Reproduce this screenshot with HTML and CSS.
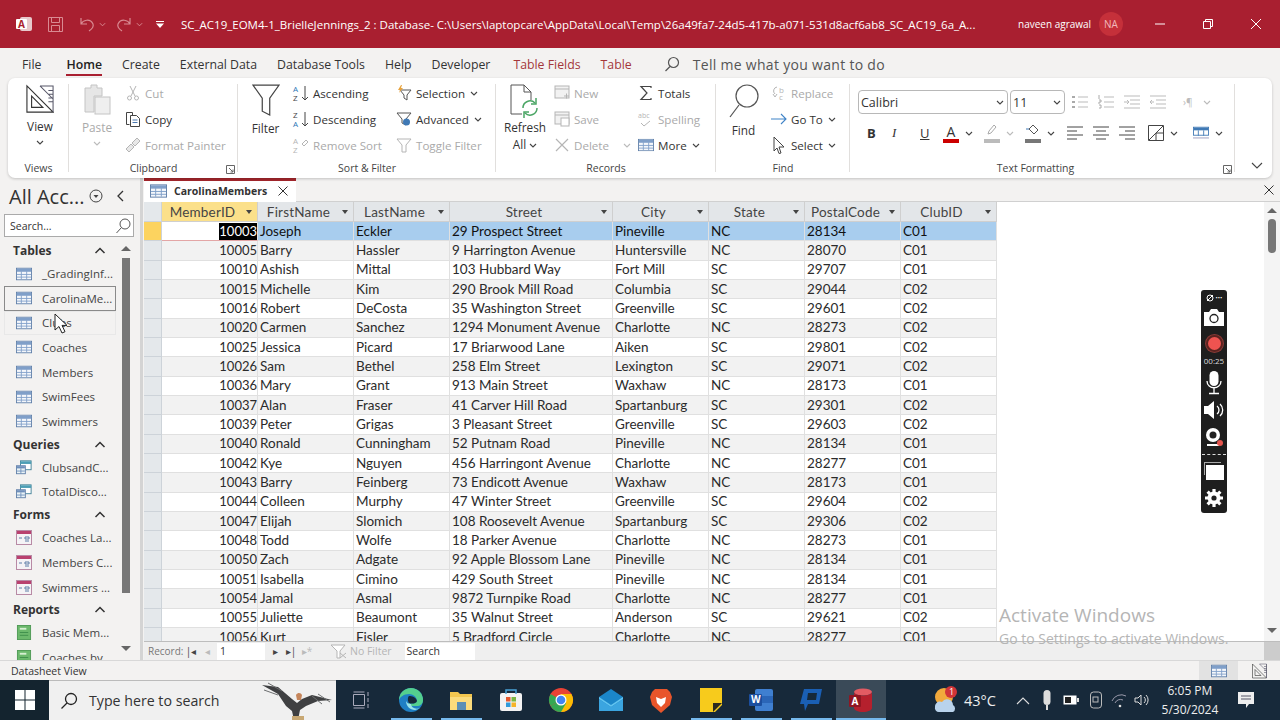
FILE: index.html
```html
<!DOCTYPE html>
<html lang="en">
<head>
    <meta charset="UTF-8">
    <title>CarolinaMembers - Access</title>
    <link rel="stylesheet" href="styles.css">
</head>
<body>
    <!-- shared icons -->
    <svg class="defs" width="0" height="0">
        <symbol id="i-chev" viewBox="0 0 8 5"><path d="M1 1l3 3 3-3" fill="none" stroke="currentColor" stroke-width="1.1"/></symbol>
        <symbol id="i-up" viewBox="0 0 12 7"><path d="M1.5 6L6 1.5 10.5 6" fill="none" stroke="#333" stroke-width="1.5"/></symbol>
        <symbol id="i-table" viewBox="0 0 18 14"><rect x=".5" y=".5" width="17" height="13" fill="#f4f7fb" stroke="#5f7ea8"/><rect x="1" y="1" width="16" height="3.5" fill="#7f9fc9"/><path d="M1 7.5h16M1 10.5h16M6 4v9M12 4v9" stroke="#7f9fc9"/></symbol>
        <symbol id="i-query" viewBox="0 0 18 16"><rect x="5" y=".5" width="12" height="10" fill="#fff" stroke="#3d7f95"/><rect x="5" y="1" width="12" height="3" fill="#4d9fb5"/><rect x=".5" y="6" width="10" height="9" fill="#eaf3f6" stroke="#5f7ea8"/><rect x="1" y="6.5" width="9" height="2.5" fill="#6f8fbb"/><path d="M5.5 9v6M1 12h9" stroke="#6f8fbb"/></symbol>
        <symbol id="i-form" viewBox="0 0 16 15"><rect x=".5" y=".5" width="15" height="14" fill="#f5f3f6" stroke="#b88aa5"/><rect x="1" y="1" width="14" height="3" fill="#b9416f"/><path d="M3 8h3M9 7h4v2H9zM9 11h4" stroke="#5f7ea8" fill="none"/></symbol>
        <symbol id="i-report" viewBox="0 0 15 16"><rect x=".5" y=".5" width="14" height="15" fill="#6cb96c" stroke="#4f9a55"/><rect x="3" y="3" width="7" height="2" fill="#d6efd2"/><path d="M3 8h9M3 11h9" stroke="#3f8f4c"/></symbol>
        <symbol id="i-ruler" viewBox="0 0 30 30"><path d="M1 1l28 28H1zM6 12v12h12z" fill="none" stroke="#333" stroke-width="1.2"/><path d="M29 1v28M15 1h14L29 29M15 1l14 14M24 6h5M24 10h5M24 14h5M24 18h5" fill="none" stroke="#556" stroke-width="1.1"/></symbol>
        <symbol id="i-funnel" viewBox="0 0 30 34"><path d="M1 1h28L19 15v18l-8-4V15z" fill="#fff" stroke="#444" stroke-width="1.3"/></symbol>
    </svg>

    <header class="titlebar">
        <div class="qat">
            <svg class="app-icon" width="18" height="18" viewBox="0 0 18 18"><rect x="5" y="2" width="12" height="14" rx="2" fill="#e7c9cc"/><rect x="1" y="4" width="11" height="10" rx="1" fill="#fff"/><text x="3" y="12.5" class="app-letter">A</text></svg>
            <svg class="qat-save" width="15" height="15" viewBox="0 0 15 15"><path d="M.5.5h14v14H.5zM3.5 .5v5h8v-5M3.5 14.5v-6h8v6" fill="none" stroke="#d98a92"/></svg>
            <svg class="qat-undo" width="16" height="16" viewBox="0 0 16 16"><path d="M2 2v6h6M2 8c2-4 9-6 12 0 1 3-1 5-4 7" fill="none" stroke="#d98a92" stroke-width="1.2"/></svg>
            <svg class="qat-chev" width="7" height="5"><use href="#i-chev"/></svg>
            <svg class="qat-redo" width="16" height="16" viewBox="0 0 16 16"><path d="M14 2v6H8M14 8C12 4 5 2 2 8c-1 3 1 5 4 7" fill="none" stroke="#d98a92" stroke-width="1.2"/></svg>
            <svg class="qat-chev" width="7" height="5"><use href="#i-chev"/></svg>
            <svg class="qat-more" width="8" height="7" viewBox="0 0 8 7"><path d="M0 0h8v1H0zM0 2.5h8L4 7z" fill="#fff"/></svg>
        </div>
        <div class="doc-title">SC_AC19_EOM4-1_BrielleJennings_2 : Database- C:\Users\laptopcare\AppData\Local\Temp\26a49fa7-24d5-417b-a071-531d8acf6ab8_SC_AC19_6a_A...</div>
        <div class="account">naveen agrawal</div>
        <div class="avatar">NA</div>
        <div class="win-btns">
            <svg width="12" height="12" viewBox="0 0 12 12"><path d="M1 6h10" stroke="#fff"/></svg>
            <svg width="12" height="12" viewBox="0 0 12 12"><path d="M1.5 3.5h7v7h-7zM3.5 3.5v-2h7v7h-2" fill="none" stroke="#fff"/></svg>
            <svg width="12" height="12" viewBox="0 0 12 12"><path d="M1 1l10 10M11 1L1 11" stroke="#fff"/></svg>
        </div>
    </header>

    <nav class="tabs">
        <span>File</span>
        <span class="tab-home">Home</span>
        <span>Create</span>
        <span>External Data</span>
        <span>Database Tools</span>
        <span>Help</span>
        <span>Developer</span>
        <span class="tab-ctx tab-first">Table Fields</span>
        <span class="tab-ctx">Table</span>
        <span class="tell-me">
            <svg width="16" height="16" viewBox="0 0 16 16"><circle cx="9.5" cy="6.5" r="5" fill="none" stroke="#555" stroke-width="1.2"/><path d="M6 10.5L1.5 15" stroke="#555" stroke-width="1.2"/></svg>
            Tell me what you want to do
        </span>
    </nav>

    <section class="ribbon">
        <div class="group g-views">
            <div class="group-body">
                <div class="big">
                    <svg class="big-icon" width="28" height="30"><use href="#i-ruler"/></svg>
                    <span class="big-text">View</span>
                    <svg class="chev" width="8" height="5"><use href="#i-chev"/></svg>
                </div>
            </div>
            <div class="group-label">Views</div>
        </div>

        <div class="group g-clip">
            <div class="group-body">
                <div class="big off">
                    <svg class="big-icon" width="28" height="31" viewBox="0 0 28 31"><path d="M2 4h6V1h6v3h5v8H11v16H2z" fill="#e6e6e6" stroke="#c4c4c4"/><rect x="12" y="13" width="15" height="17" fill="#efefef" stroke="#c4c4c4"/></svg>
                    <span class="big-text">Paste</span>
                    <svg class="chev" width="8" height="5"><use href="#i-chev"/></svg>
                </div>
                <div class="col">
                    <div class="rb off"><svg width="16" height="16" viewBox="0 0 16 16"><path d="M5 1l5 10M11 1L6 11" stroke="#b5b5b5" fill="none"/><circle cx="4.5" cy="13" r="2" fill="none" stroke="#b5b5b5"/><circle cx="11.5" cy="13" r="2" fill="none" stroke="#b5b5b5"/></svg>Cut</div>
                    <div class="rb"><svg width="16" height="16" viewBox="0 0 16 16"><path d="M1.5 1.5h6v3M4.5 13.5h-3v-12" fill="none" stroke="#444"/><path d="M5.5 4.5h6l3 3v8h-9z" fill="#fff" stroke="#444"/><path d="M7.5 9h5M7.5 11.5h5" stroke="#4a78b0"/></svg>Copy</div>
                    <div class="rb off"><svg width="16" height="16" viewBox="0 0 16 16"><path d="M1 12l5-5 3 3-5 5zM7 6l5-5 3 3-5 5z" fill="#e8e8e8" stroke="#b5b5b5"/></svg>Format Painter</div>
                </div>
            </div>
            <div class="group-label">Clipboard</div>
            <svg class="launcher" width="9" height="9" viewBox="0 0 9 9"><path d="M.5 8.5v-8h8v8zM3 3l4 4M7 4.5V7H4.5" fill="none" stroke="#666"/></svg>
        </div>

        <div class="group g-sort">
            <div class="group-body">
                <div class="big">
                    <svg class="big-icon" width="28" height="32"><use href="#i-funnel"/></svg>
                    <span class="big-text">Filter</span>
                </div>
                <div class="col">
                    <div class="rb"><svg width="16" height="18" viewBox="0 0 16 18"><text x="0" y="8" class="az az-blue">A</text><text x="0" y="17" class="az">Z</text><path d="M12 2v14M9 13l3 3 3-3" fill="none" stroke="#444"/></svg>Ascending</div>
                    <div class="rb"><svg width="16" height="18" viewBox="0 0 16 18"><text x="0" y="8" class="az">Z</text><text x="0" y="17" class="az az-blue">A</text><path d="M12 2v14M9 13l3 3 3-3" fill="none" stroke="#444"/></svg>Descending</div>
                    <div class="rb off"><svg width="16" height="18" viewBox="0 0 16 18"><text x="0" y="8" class="az az-off">A</text><text x="0" y="17" class="az az-off">Z</text><path d="M9 8l4-4 2 2-4 4z" fill="none" stroke="#b5b5b5"/></svg>Remove Sort</div>
                </div>
                <div class="col">
                    <div class="rb"><svg width="16" height="16" viewBox="0 0 16 16"><path d="M4 5h11l-4 5v5l-3-2v-3z" fill="#fff" stroke="#555"/><path d="M5 0L2 5h2L3 8l4-5H5l1-3z" fill="#e8a33c"/></svg>Selection<svg class="chev" width="8" height="5"><use href="#i-chev"/></svg></div>
                    <div class="rb"><svg width="16" height="16" viewBox="0 0 16 16"><path d="M1 2h14l-5 6v6l-4-2V8z" fill="#fff" stroke="#555"/><circle cx="10.5" cy="11" r="3.5" fill="#3f79b5"/></svg>Advanced<svg class="chev" width="8" height="5"><use href="#i-chev"/></svg></div>
                    <div class="rb off"><svg width="16" height="16" viewBox="0 0 16 16"><path d="M1 2h14l-5 6v7H6V8z" fill="#fff" stroke="#b5b5b5"/></svg>Toggle Filter</div>
                </div>
            </div>
            <div class="group-label">Sort &amp; Filter</div>
        </div>

        <div class="group g-records">
            <div class="group-body">
                <div class="big">
                    <svg class="big-icon" width="30" height="36" viewBox="0 0 30 36"><path d="M1 1h13l7 7v8M12 30H1V1M14 1v7h7" fill="#fff" stroke="#555"/><path d="M13 24a7 7 0 0 1 12-5M27 24a7 7 0 0 1-12 5" fill="none" stroke="#4aa564" stroke-width="1.5"/><path d="M26 14v6h-5M14 34v-6h5" fill="none" stroke="#4aa564" stroke-width="1.5"/></svg>
                    <span class="big-text refresh-text">Refresh<br>All<svg class="chev" width="8" height="5"><use href="#i-chev"/></svg></span>
                </div>
                <div class="col">
                    <div class="rb off"><svg width="16" height="16" viewBox="0 0 16 16"><rect x="1" y="1" width="14" height="12" fill="#f2f2f2" stroke="#b5b5b5"/><path d="M1 4h14M10 11h5M12.5 8.5v5" stroke="#b5b5b5"/></svg>New</div>
                    <div class="rb off"><svg width="16" height="16" viewBox="0 0 16 16"><rect x="1" y="1" width="14" height="12" fill="#f2f2f2" stroke="#b5b5b5"/><path d="M1 4h14" stroke="#b5b5b5"/><rect x="7" y="7" width="8" height="8" fill="#fff" stroke="#b5b5b5"/></svg>Save</div>
                    <div class="rb off"><svg width="16" height="16" viewBox="0 0 16 16"><path d="M2 2l12 12M14 2L2 14" stroke="#b5b5b5" stroke-width="1.2"/></svg>Delete<svg class="chev chev-far" width="8" height="5"><use href="#i-chev"/></svg></div>
                </div>
                <div class="col">
                    <div class="rb"><svg width="16" height="16" viewBox="0 0 16 16"><path d="M13 3V1.5H3L9 8l-6 6.5h10V13" fill="none" stroke="#444" stroke-width="1.2"/></svg>Totals</div>
                    <div class="rb off"><svg width="16" height="16" viewBox="0 0 16 16"><text x="0" y="7" class="abc">abc</text><path d="M3 12l3 3 6-5" fill="none" stroke="#b5b5b5"/></svg>Spelling</div>
                    <div class="rb"><svg width="16" height="16" viewBox="0 0 18 14"><use href="#i-table"/></svg>More<svg class="chev" width="8" height="5"><use href="#i-chev"/></svg></div>
                </div>
            </div>
            <div class="group-label">Records</div>
        </div>

        <div class="group g-find">
            <div class="group-body">
                <div class="big">
                    <svg class="big-icon" width="30" height="34" viewBox="0 0 30 34"><circle cx="18" cy="12" r="11" fill="#fff" stroke="#555" stroke-width="1.2"/><path d="M10 21L1 33" stroke="#555" stroke-width="1.2"/></svg>
                    <span class="big-text">Find</span>
                </div>
                <div class="col">
                    <div class="rb off"><svg width="16" height="16" viewBox="0 0 16 16"><text x="8" y="8" class="az az-off">b</text><text x="8" y="15" class="az az-off">c</text><path d="M6 2a4 4 0 0 0-2 7M2 9l2 3 2-3" fill="none" stroke="#b5b5b5"/></svg>Replace</div>
                    <div class="rb"><svg width="16" height="16" viewBox="0 0 16 16"><path d="M0 8h15M10 3l5 5-5 5" fill="none" stroke="#3f83c7" stroke-width="1.1"/></svg>Go To<svg class="chev" width="8" height="5"><use href="#i-chev"/></svg></div>
                    <div class="rb"><svg width="16" height="18" viewBox="0 0 16 18"><path d="M3 1l10 10H8l2 6-2 .5L6 12l-3 3z" fill="#fff" stroke="#444"/></svg>Select<svg class="chev" width="8" height="5"><use href="#i-chev"/></svg></div>
                </div>
            </div>
            <div class="group-label">Find</div>
        </div>

        <div class="group g-text">
            <div class="fmt-row fmt-top">
                <div class="combo combo-font">Calibri<svg class="chev" width="8" height="5"><use href="#i-chev"/></svg></div>
                <div class="combo combo-size">11<svg class="chev" width="8" height="5"><use href="#i-chev"/></svg></div>
                <div class="list-icons">
                    <svg width="16" height="14" viewBox="0 0 16 14"><path d="M0 2h3M0 7h3M0 12h3" stroke="#aaa" stroke-width="2"/><path d="M6 2h10M6 7h10M6 12h10" stroke="#bbb"/></svg>
                    <svg width="16" height="14" viewBox="0 0 16 14"><path d="M1 0v4M1 5h2v2H1v2M1 10h2v3H1" fill="none" stroke="#aaa"/><path d="M6 2h10M6 7h10M6 12h10" stroke="#bbb"/></svg>
                    <svg width="16" height="14" viewBox="0 0 16 14"><path d="M0 1h16M6 5h10M6 9h10M0 13h16M0 7h4M3 5l2 2-2 2" fill="none" stroke="#bbb"/></svg>
                    <svg width="16" height="14" viewBox="0 0 16 14"><path d="M0 1h16M6 5h10M6 9h10M0 13h16M0 7h4M2 5L0 7l2 2" fill="none" stroke="#bbb"/></svg>
                    <span class="pilcrow">›¶</span>
                    <svg class="chev off" width="8" height="5"><use href="#i-chev"/></svg>
                </div>
            </div>
            <div class="fmt-row fmt-bottom">
                <b class="fmt-b">B</b>
                <i class="fmt-i">I</i>
                <u class="fmt-u">U</u>
                <span class="swatch swatch-font">A</span><svg class="chev" width="8" height="5"><use href="#i-chev"/></svg>
                <span class="swatch swatch-hl"><svg width="16" height="11" viewBox="0 0 16 11"><path d="M4 10l1-3 5-6 2 2-5 6z" fill="none" stroke="#aaa"/></svg></span><svg class="chev off" width="8" height="5"><use href="#i-chev"/></svg>
                <span class="swatch swatch-fill"><svg width="16" height="11" viewBox="0 0 16 11"><path d="M8 1l5 5-4 4-5-5z" fill="none" stroke="#555"/><path d="M1 5h3" stroke="#3f79b5"/></svg></span><svg class="chev" width="8" height="5"><use href="#i-chev"/></svg>
                <div class="aligns">
                    <svg width="16" height="14" viewBox="0 0 16 14"><path d="M0 1h16M0 5h10M0 9h16M0 13h10" stroke="#444"/></svg>
                    <svg width="16" height="14" viewBox="0 0 16 14"><path d="M0 1h16M3 5h10M0 9h16M3 13h10" stroke="#444"/></svg>
                    <svg width="16" height="14" viewBox="0 0 16 14"><path d="M0 1h16M6 5h10M0 9h16M6 13h10" stroke="#444"/></svg>
                </div>
                <svg class="grid-btn" width="16" height="16" viewBox="0 0 16 16"><path d="M.5.5h15v15H.5zM1 15L15 1M8 8v7M8 8h7" fill="none" stroke="#444"/></svg><svg class="chev" width="8" height="5"><use href="#i-chev"/></svg>
                <svg class="alt-btn" width="16" height="14" viewBox="0 0 18 14"><rect x=".5" y=".5" width="17" height="9" fill="#fff" stroke="#3f79b5"/><rect x="1" y="1" width="16" height="3" fill="#3f79b5"/><path d="M6 4v6M12 4v6" stroke="#3f79b5"/><path d="M0 12.5h18" stroke="#ccd" stroke-width="2"/></svg><svg class="chev" width="8" height="5"><use href="#i-chev"/></svg>
            </div>
            <div class="group-label">Text Formatting</div>
            <svg class="launcher" width="9" height="9" viewBox="0 0 9 9"><path d="M.5 8.5v-8h8v8zM3 3l4 4M7 4.5V7H4.5" fill="none" stroke="#666"/></svg>
        </div>
        <svg class="collapse" width="12" height="8" viewBox="0 0 12 8"><path d="M1 1l5 5 5-5" fill="none" stroke="#444" stroke-width="1.1"/></svg>
    </section>

    <div class="workspace">
        <aside class="nav-pane">
            <div class="nav-head">
                <span class="nav-title">All Acc...</span>
                <svg width="14" height="14" viewBox="0 0 14 14"><circle cx="7" cy="7" r="6" fill="none" stroke="#444"/><path d="M4.5 6h5L7 9z" fill="#444"/></svg>
                <svg class="nav-close" width="8" height="12" viewBox="0 0 8 12"><path d="M7 1L2 6l5 5" fill="none" stroke="#333" stroke-width="1.3"/></svg>
            </div>
            <div class="nav-search">
                <span>Search...</span>
                <svg width="16" height="16" viewBox="0 0 16 16"><circle cx="10" cy="6" r="5" fill="none" stroke="#555"/><path d="M6.5 9.5L1.5 15" stroke="#555"/></svg>
            </div>
            <div class="nav-main">
                <div class="nav-list">
                    <div class="nav-sec">Tables<svg width="12" height="7"><use href="#i-up"/></svg></div>
                    <div class="nav-item"><svg width="16" height="14"><use href="#i-table"/></svg>_GradingInf...</div>
                    <div class="nav-item is-selected"><svg width="16" height="14"><use href="#i-table"/></svg>CarolinaMe...</div>
                    <div class="nav-item is-hover"><svg width="16" height="14"><use href="#i-table"/></svg>Clubs</div>
                    <div class="nav-item"><svg width="16" height="14"><use href="#i-table"/></svg>Coaches</div>
                    <div class="nav-item"><svg width="16" height="14"><use href="#i-table"/></svg>Members</div>
                    <div class="nav-item"><svg width="16" height="14"><use href="#i-table"/></svg>SwimFees</div>
                    <div class="nav-item"><svg width="16" height="14"><use href="#i-table"/></svg>Swimmers</div>
                    <div class="nav-sec">Queries<svg width="12" height="7"><use href="#i-up"/></svg></div>
                    <div class="nav-item"><svg width="16" height="15"><use href="#i-query"/></svg>ClubsandC...</div>
                    <div class="nav-item"><svg width="16" height="15"><use href="#i-query"/></svg>TotalDisco...</div>
                    <div class="nav-sec">Forms<svg width="12" height="7"><use href="#i-up"/></svg></div>
                    <div class="nav-item"><svg width="16" height="15"><use href="#i-form"/></svg>Coaches La...</div>
                    <div class="nav-item"><svg width="16" height="15"><use href="#i-form"/></svg>Members C...</div>
                    <div class="nav-item"><svg width="16" height="15"><use href="#i-form"/></svg>Swimmers ...</div>
                    <div class="nav-sec">Reports<svg width="12" height="7"><use href="#i-up"/></svg></div>
                    <div class="nav-item"><svg width="16" height="15"><use href="#i-report"/></svg>Basic Mem...</div>
                    <div class="nav-item"><svg width="16" height="15"><use href="#i-report"/></svg>Coaches by...</div>
                </div>
                <div class="nav-scroll">
                    <span class="arrow-up"></span>
                    <div class="nav-thumb"></div>
                    <span class="arrow-down"></span>
                </div>
            </div>
        </aside>

        <main class="doc">
            <div class="doc-tabs">
                <div class="doc-tab">
                    <svg width="17" height="14"><use href="#i-table"/></svg>
                    <span>CarolinaMembers</span>
                    <svg width="10" height="10" viewBox="0 0 10 10"><path d="M.5.5l9 9M9.5.5l-9 9" stroke="#333"/></svg>
                </div>
                <svg class="doc-close" width="10" height="10" viewBox="0 0 10 10"><path d="M.5.5l9 9M9.5.5l-9 9" stroke="#333"/></svg>
            </div>
            <div class="sheet-wrap">
                <div class="sheet">
                    <table class="grid">
                        <colgroup>
                            <col class="c-sel"><col class="c-std"><col class="c-std"><col class="c-std"><col class="c-street"><col class="c-std"><col class="c-std"><col class="c-std"><col class="c-std">
                        </colgroup>
                        <thead>
                            <tr>
                                <th class="sel"></th>
                                <th class="th-active">MemberID<i class="drop"></i></th>
                                <th>FirstName<i class="drop"></i></th>
                                <th>LastName<i class="drop"></i></th>
                                <th>Street<i class="drop"></i></th>
                                <th>City<i class="drop"></i></th>
                                <th>State<i class="drop"></i></th>
                                <th>PostalCode<i class="drop"></i></th>
                                <th>ClubID<i class="drop"></i></th>
                            </tr>
                        </thead>
                        <tbody>
                            <tr class="row-current"><td class="sel"></td><td class="num"><span class="cell-mark">10003</span></td><td>Joseph</td><td>Eckler</td><td>29 Prospect Street</td><td>Pineville</td><td>NC</td><td>28134</td><td>C01</td></tr>
                            <tr><td class="sel"></td><td class="num">10005</td><td>Barry</td><td>Hassler</td><td>9 Harrington Avenue</td><td>Huntersville</td><td>NC</td><td>28070</td><td>C01</td></tr>
                            <tr><td class="sel"></td><td class="num">10010</td><td>Ashish</td><td>Mittal</td><td>103 Hubbard Way</td><td>Fort Mill</td><td>SC</td><td>29707</td><td>C01</td></tr>
                            <tr><td class="sel"></td><td class="num">10015</td><td>Michelle</td><td>Kim</td><td>290 Brook Mill Road</td><td>Columbia</td><td>SC</td><td>29044</td><td>C02</td></tr>
                            <tr><td class="sel"></td><td class="num">10016</td><td>Robert</td><td>DeCosta</td><td>35 Washington Street</td><td>Greenville</td><td>SC</td><td>29601</td><td>C02</td></tr>
                            <tr><td class="sel"></td><td class="num">10020</td><td>Carmen</td><td>Sanchez</td><td>1294 Monument Avenue</td><td>Charlotte</td><td>NC</td><td>28273</td><td>C02</td></tr>
                            <tr><td class="sel"></td><td class="num">10025</td><td>Jessica</td><td>Picard</td><td>17 Briarwood Lane</td><td>Aiken</td><td>SC</td><td>29801</td><td>C02</td></tr>
                            <tr><td class="sel"></td><td class="num">10026</td><td>Sam</td><td>Bethel</td><td>258 Elm Street</td><td>Lexington</td><td>SC</td><td>29071</td><td>C02</td></tr>
                            <tr><td class="sel"></td><td class="num">10036</td><td>Mary</td><td>Grant</td><td>913 Main Street</td><td>Waxhaw</td><td>NC</td><td>28173</td><td>C01</td></tr>
                            <tr><td class="sel"></td><td class="num">10037</td><td>Alan</td><td>Fraser</td><td>41 Carver Hill Road</td><td>Spartanburg</td><td>SC</td><td>29301</td><td>C02</td></tr>
                            <tr><td class="sel"></td><td class="num">10039</td><td>Peter</td><td>Grigas</td><td>3 Pleasant Street</td><td>Greenville</td><td>SC</td><td>29603</td><td>C02</td></tr>
                            <tr><td class="sel"></td><td class="num">10040</td><td>Ronald</td><td>Cunningham</td><td>52 Putnam Road</td><td>Pineville</td><td>NC</td><td>28134</td><td>C01</td></tr>
                            <tr><td class="sel"></td><td class="num">10042</td><td>Kye</td><td>Nguyen</td><td>456 Harringont Avenue</td><td>Charlotte</td><td>NC</td><td>28277</td><td>C01</td></tr>
                            <tr><td class="sel"></td><td class="num">10043</td><td>Barry</td><td>Feinberg</td><td>73 Endicott Avenue</td><td>Waxhaw</td><td>NC</td><td>28173</td><td>C01</td></tr>
                            <tr><td class="sel"></td><td class="num">10044</td><td>Colleen</td><td>Murphy</td><td>47 Winter Street</td><td>Greenville</td><td>SC</td><td>29604</td><td>C02</td></tr>
                            <tr><td class="sel"></td><td class="num">10047</td><td>Elijah</td><td>Slomich</td><td>108 Roosevelt Avenue</td><td>Spartanburg</td><td>SC</td><td>29306</td><td>C02</td></tr>
                            <tr><td class="sel"></td><td class="num">10048</td><td>Todd</td><td>Wolfe</td><td>18 Parker Avenue</td><td>Charlotte</td><td>NC</td><td>28273</td><td>C01</td></tr>
                            <tr><td class="sel"></td><td class="num">10050</td><td>Zach</td><td>Adgate</td><td>92 Apple Blossom Lane</td><td>Pineville</td><td>NC</td><td>28134</td><td>C01</td></tr>
                            <tr><td class="sel"></td><td class="num">10051</td><td>Isabella</td><td>Cimino</td><td>429 South Street</td><td>Pineville</td><td>NC</td><td>28134</td><td>C01</td></tr>
                            <tr><td class="sel"></td><td class="num">10054</td><td>Jamal</td><td>Asmal</td><td>9872 Turnpike Road</td><td>Charlotte</td><td>NC</td><td>28277</td><td>C01</td></tr>
                            <tr><td class="sel"></td><td class="num">10055</td><td>Juliette</td><td>Beaumont</td><td>35 Walnut Street</td><td>Anderson</td><td>SC</td><td>29621</td><td>C02</td></tr>
                            <tr><td class="sel"></td><td class="num">10056</td><td>Kurt</td><td>Fisler</td><td>5 Bradford Circle</td><td>Charlotte</td><td>NC</td><td>28277</td><td>C01</td></tr>
                        </tbody>
                    </table>
                </div>
                <div class="v-scroll">
                    <span class="arrow-up"></span>
                    <div class="v-thumb"></div>
                    <span class="arrow-down"></span>
                </div>
                <div class="activate">
                    <div class="activate-big">Activate Windows</div>
                    <div>Go to Settings to activate Windows.</div>
                </div>
            </div>
            <div class="record-bar">
                <span class="rec-label">Record:</span>
                <span class="rec-btn">|◂</span>
                <span class="rec-btn rec-off">◂</span>
                <span class="rec-input">1</span>
                <span class="rec-btn">▸</span>
                <span class="rec-btn">▸|</span>
                <span class="rec-btn rec-off">▸*</span>
                <span class="rec-filter">
                    <svg width="18" height="15" viewBox="0 0 18 15"><path d="M1 1h14l-5 6v7H7V7z" fill="#fff" stroke="#b5b5b5"/><path d="M10 9l6 5M16 9l-6 5" stroke="#b5b5b5"/></svg>
                    No Filter
                </span>
                <span class="rec-search">Search</span>
                <span class="rec-corner"></span>
            </div>
        </main>
    </div>

    <footer class="statusbar">
        <span>Datasheet View</span>
        <span class="view-btn is-on"><svg width="16" height="14"><use href="#i-table"/></svg></span>
        <span class="view-btn"><svg width="15" height="16"><use href="#i-ruler"/></svg></span>
    </footer>

    <div class="taskbar">
        <div class="start">
            <svg width="20" height="20" viewBox="0 0 20 20"><path d="M0 0h9.5v9.5H0zM10.5 0H20v9.5h-9.5zM0 10.5h9.5V20H0zM10.5 10.5H20V20h-9.5z" fill="#fff"/></svg>
        </div>
        <div class="task-search">
            <svg width="18" height="18" viewBox="0 0 18 18"><circle cx="11" cy="7" r="5.5" fill="none" stroke="#222" stroke-width="1.3"/><path d="M7 11l-5.5 5.5" stroke="#222" stroke-width="1.3"/></svg>
            <span>Type here to search</span>
            <svg class="condor" width="72" height="38" viewBox="0 0 72 38"><path d="M0 3l16 2 14 12 5 4 5-4 10-4 20 5-14 1-12 5-6 4-2 10h-4l-2-9-6-5L16 12z" fill="#3f4042"/><path d="M2 8l14 5M6 1l14 8M56 12l12 8M50 14l10 8" stroke="#6d6f70" fill="none"/><path d="M34 13c2-3 5-2 6 0l-1 5h-4z" fill="#c5855b"/><path d="M30 34h12v4H30z" fill="#c8a874"/></svg>
        </div>
        <div class="task-icons">
            <span class="slot"><svg width="18" height="18" viewBox="0 0 18 18"><path d="M1.5 3.5h11v11h-11zM1.5 1h11M1.5 17h11M16 1v4M16 7v4M16 13v4" fill="none" stroke="#aab"/></svg></span>
            <span class="slot is-open"><svg width="26" height="26" viewBox="0 0 26 26"><circle cx="13" cy="13" r="12" fill="#1f7fc4"/><path d="M13 1a12 12 0 0 1 12 12c0 4-3 6-6 6h-5c-3 0-4-2-3-3 2 1 7 1 8-2 0-4-4-7-8-7-5 0-9 3-10 6a12 12 0 0 1 12-12z" fill="#54cf8e"/><path d="M8 14c0 5 4 9 9 9a12 12 0 0 0 5-2c-5 2-9-1-9-4-3 0-4-1-5-3z" fill="#9be3ea"/><path d="M11 9c3 0 7 1 8 5-1 3-6 3-8 2-1-1-2-5 0-7z" fill="#17293a"/></svg></span>
            <span class="slot is-open"><svg width="24" height="22" viewBox="0 0 24 22"><path d="M1 3h8l2 2h12v16H1z" fill="#f3c64f"/><path d="M1 8h22v13H1z" fill="#fbdb7c"/><rect x="8" y="13" width="9" height="8" fill="#5b8fb6"/></svg></span>
            <span class="slot"><svg width="24" height="24" viewBox="0 0 24 24"><rect x="1" y="5" width="22" height="18" rx="2" fill="#f3f3f3"/><path d="M7 6V2h10v4" fill="none" stroke="#4aa3d8" stroke-width="1.5"/><rect x="7" y="9" width="4.5" height="4.5" fill="#e4572e"/><rect x="12.5" y="9" width="4.5" height="4.5" fill="#7ab743"/><rect x="7" y="14.5" width="4.5" height="4.5" fill="#2f9bdb"/><rect x="12.5" y="14.5" width="4.5" height="4.5" fill="#f6b42a"/></svg></span>
            <span class="slot"><svg width="24" height="24" viewBox="0 0 24 24"><circle cx="12" cy="12" r="12" fill="#e94235"/><path d="M12 12L1.6 18A12 12 0 0 1 1.6 6z" fill="#34a853"/><path d="M12 24a12 12 0 0 0 10.4-18H12l-5 12z" fill="#fbbc04"/><path d="M12 24l5.2-9-5-3L1.6 18A12 12 0 0 0 12 24z" fill="#34a853"/><circle cx="12" cy="12" r="5.5" fill="#fff"/><circle cx="12" cy="12" r="4.3" fill="#4285f4"/></svg></span>
            <span class="slot"><svg width="24" height="22" viewBox="0 0 24 22"><path d="M0 8L12 0l12 8v14H0z" fill="#1b86c9"/><path d="M0 8l12 8 12-8v2L12 18 0 10z" fill="#62c3ef"/><path d="M0 10l12 8 12-8v12H0z" fill="#3ba5e0"/></svg></span>
            <span class="slot"><svg width="22" height="25" viewBox="0 0 22 25"><path d="M5 1h12l3 3 2 5-2 8-9 8-9-8-2-8 2-5z" fill="#e8552b"/><path d="M6 9l5 2 5-2-1 6-4 4-4-4z" fill="#fff"/></svg></span>
            <span class="slot is-open"><svg width="22" height="24" viewBox="0 0 22 24"><path d="M0 0h22v17l-7 7H0z" fill="#f7cb1c"/><path d="M22 15h-9v9z" fill="#2d2a20"/></svg></span>
            <span class="slot is-open"><svg width="24" height="22" viewBox="0 0 24 22"><rect x="6" y="0" width="18" height="22" rx="2" fill="#3f7fd0"/><rect x="6" y="7" width="18" height="7" fill="#2b66b8"/><rect x="0" y="5" width="13" height="12" rx="1" fill="#1c4f9f"/><text x="2" y="14" class="word-w">W</text></svg></span>
            <span class="slot is-open"><svg width="24" height="24" viewBox="0 0 24 24"><path d="M5 1h18l-3 15H9l-3 7-1-7H1z" fill="#1a5fb4"/><path d="M9 5h9l-1 7H8z" fill="#16293a"/></svg></span>
            <span class="slot is-open is-active"><svg width="24" height="24" viewBox="0 0 24 24"><ellipse cx="14" cy="4" rx="9" ry="3.5" fill="#e25b63"/><path d="M5 4v16c0 2 4 4 9 4s9-2 9-4V4c0 2-4 3.5-9 3.5S5 6 5 4z" fill="#b5202d"/><rect x="0" y="7" width="12" height="12" rx="1" fill="#8f1622"/><text x="2.5" y="16.5" class="word-w">A</text></svg></span>
        </div>
        <div class="tray">
            <span class="weather">
                <svg width="27" height="28" viewBox="0 0 27 28"><circle cx="13" cy="11" r="9" fill="#f1a93c"/><path d="M4 21a5 5 0 0 1 7-5 6 6 0 0 1 11 3 4 4 0 0 1 0 7H8a4 4 0 0 1-4-5z" fill="#b9d3ec"/><circle cx="20" cy="6" r="6" fill="#d13438"/><text x="18" y="9" class="badge-num">1</text></svg>
                <span class="temp">43°C</span>
            </span>
            <svg class="tray-caret" width="14" height="9" viewBox="0 0 14 9"><path d="M1 8l6-6 6 6" fill="none" stroke="#ddd" stroke-width="1.1"/></svg>
            <svg class="tray-mic" width="10" height="20" viewBox="0 0 10 20"><rect x="1.5" y="0" width="7" height="15" rx="3.5" fill="#ddd"/><path d="M5 15v5" stroke="#ddd" stroke-width="2"/></svg>
            <svg class="tray-bat" width="16" height="10" viewBox="0 0 16 10"><rect x=".5" y=".5" width="13" height="9" fill="#fff"/><rect x="2" y="2" width="6" height="6" fill="#222"/><rect x="14" y="3" width="2" height="4" fill="#ddd"/></svg>
            <svg class="tray-cam" width="14" height="18" viewBox="0 0 14 18"><rect x="1.5" y="1" width="11" height="16" rx="3" fill="none" stroke="#bbb"/><rect x="4" y="6" width="5" height="5" fill="none" stroke="#bbb"/></svg>
            <svg class="tray-wifi" width="16" height="15" viewBox="0 0 16 15"><path d="M1 8a10 10 0 0 1 14-5M4 10a6 6 0 0 1 8-3" fill="none" stroke="#99a"/><circle cx="9" cy="13" r="1.3" fill="#ddd"/></svg>
            <svg class="tray-vol" width="15" height="14" viewBox="0 0 15 14"><path d="M1 5h3l3-3v10L4 9H1z" fill="none" stroke="#ddd"/><path d="M10 4a4 4 0 0 1 0 6M12 2a7 7 0 0 1 0 10" fill="none" stroke="#ddd"/></svg>
            <span class="clock">6:05 PM<br>5/30/2024</span>
            <svg class="tray-note" width="18" height="18" viewBox="0 0 18 18"><path d="M1 1h16v12h-5l-3 4v-4H1z" fill="#eee"/><path d="M4 5h10M4 8h10" stroke="#556"/></svg>
        </div>
    </div>

    <!-- things on top of the window -->
    <svg class="cursor" width="14" height="21" viewBox="0 0 14 21"><path d="M1 1v16l4-3.5 3 6.5 3-1.3-3-6.300h5z" fill="#fff" stroke="#222"/></svg>

    <div class="recorder">
        <div class="rec-top"><svg width="8" height="8" viewBox="0 0 8 8"><circle cx="4" cy="4" r="3" fill="none" stroke="#fff"/><path d="M1 7l6-6" stroke="#fff"/></svg><span>•••</span></div>
        <svg class="rc-camera" width="20" height="17" viewBox="0 0 20 17"><path d="M0 3h5l2-3h6l2 3h5v14H0z" fill="#fff"/><circle cx="10" cy="9.5" r="4" fill="none" stroke="#222" stroke-width="1.3"/></svg>
        <span class="rec-dot"></span>
        <span class="rec-time">00:25</span>
        <svg class="rc-mic" width="16" height="24" viewBox="0 0 16 24"><rect x="3.5" y="0" width="9" height="15" rx="4.5" fill="#fff"/><path d="M1 10c0 9 14 9 14 0M8 17v5M3 22.5h10" fill="none" stroke="#fff" stroke-width="1.3"/></svg>
        <svg class="rc-speaker" width="20" height="18" viewBox="0 0 20 18"><path d="M0 5h4l6-5v18l-6-5H0z" fill="#fff"/><path d="M13 5a5 5 0 0 1 0 8M16 3a8 8 0 0 1 0 12" fill="none" stroke="#fff" stroke-width="1.3"/></svg>
        <svg class="rc-webcam" width="20" height="20" viewBox="0 0 20 20"><circle cx="9" cy="8" r="7" fill="#fff"/><circle cx="9" cy="8" r="3.5" fill="#222"/><path d="M3 18h12" stroke="#fff" stroke-width="2"/><circle cx="16" cy="16" r="3" fill="#e6554e"/></svg>
        <span class="rec-dash"></span>
        <svg class="rc-stack" width="20" height="18" viewBox="0 0 20 18"><path d="M0 0h17v1H1v12H0z" fill="#aaa"/><rect x="2" y="3" width="18" height="15" fill="#fff"/></svg>
        <svg class="rc-gear" width="20" height="20" viewBox="0 0 20 20"><path d="M10 1v18M1 10h18M3.6 3.6l12.800 12.800M16.400 3.600L3.600 16.400" stroke="#fff" stroke-width="3.200"/><circle cx="10" cy="10" r="5" fill="none" stroke="#fff" stroke-width="3"/><circle cx="10" cy="10" r="2.600" fill="#1e1e1e"/></svg>
    </div>
</body>
</html>
```

FILE: styles.css
```css
* {
    box-sizing: border-box;
}
html, body {
    margin: 0;
    height: 100%;
}
body {
    position: relative;
    display: flex;
    flex-direction: column;
    width: 1280px;
    height: 720px;
    overflow: hidden;
    font-family: "Open Sans", "Noto Sans", sans-serif;
    font-size: 12px;
    color: #333;
    background: #f3f2f1;
}
.defs {
    position: absolute;
}
svg {
    flex: none;
    overflow: visible;
}
.chev {
    color: #444;
    margin-left: 6px;
}
.chev.off,
.off .chev {
    color: #bbb;
}

/* title bar */
.titlebar {
    display: flex;
    align-items: center;
    height: 48px;
    background: #a91f30;
    color: #fff;
}
.qat {
    display: flex;
    align-items: center;
    flex: none;
    width: 181px;
    padding-left: 15px;
    color: #d98a92;
}
.app-letter {
    font-size: 10px;
    font-weight: 700;
    fill: #a91f30;
}
.qat-save {
    margin-left: 15px;
}
.qat-undo {
    margin-left: 16px;
}
.qat-redo {
    margin-left: 10px;
}
.qat-chev {
    margin-left: 4px;
}
.qat-more {
    margin-left: 13px;
}
.doc-title {
    flex: none;
    width: 837px;
    font-size: 11.5px;
    white-space: nowrap;
}
.account {
    width: 72px;
    font-size: 10px;
    white-space: nowrap;
}
.avatar {
    display: flex;
    align-items: center;
    justify-content: center;
    width: 24px;
    height: 24px;
    margin-left: 9px;
    border-radius: 50%;
    background: #c5303a;
    color: #f2b8bb;
    font-size: 10px;
}
.win-btns {
    display: flex;
    gap: 36px;
    margin-left: 31px;
}

/* ribbon tabs */
.tabs {
    display: flex;
    align-items: center;
    gap: 20px;
    height: 30px;
    padding: 2px 0 0 22px;
    font-size: 12.3px;
}
.tab-home {
    position: relative;
    margin-left: 5px;
    color: #222;
    font-weight: 600;
}
.tab-home::after {
    content: "";
    position: absolute;
    left: 0;
    right: 0;
    bottom: -3px;
    height: 2px;
    background: #a91f30;
}
.tab-ctx {
    color: #a4373a;
}
.tab-first {
    margin-left: 3px;
}
.tell-me {
    display: flex;
    align-items: center;
    gap: 13px;
    margin-left: 12px;
    color: #555;
    font-size: 14px;
    letter-spacing: 0.3px;
}

/* ribbon */
.ribbon {
    position: relative;
    display: flex;
    height: 100px;
    margin: 0 8px;
    padding-top: 3px;
    border-radius: 7px;
    background: #fff;
    box-shadow: 0 1px 3px rgba(0, 0, 0, 0.2);
}
.group {
    position: relative;
    display: flex;
    flex-direction: column;
    flex: none;
    height: 96px;
}
.group::after {
    content: "";
    position: absolute;
    top: 3px;
    right: 0;
    bottom: 5px;
    width: 1px;
    background: #e1dfdd;
}
.g-views { width: 61px; }
.g-clip { width: 169px; }
.g-sort { width: 258px; }
.g-records { width: 220px; }
.g-find { width: 134px; }
.g-text { width: 385px; }
.group-body {
    display: flex;
    flex: 1;
}
.group-label {
    height: 18px;
    color: #444;
    font-size: 10.5px;
    line-height: 18px;
    text-align: center;
}
.g-text .group-label {
    padding-right: 14px;
}
.launcher {
    position: absolute;
    right: 3px;
    bottom: 3px;
}
.big {
    display: flex;
    flex: none;
    flex-direction: column;
    align-items: center;
    width: 56px;
    padding-top: 3px;
    font-size: 11.8px;
}
.g-views .big {
    width: 100%;
    padding-left: 3px;
}
.g-sort .big,
.g-find .big {
    width: 55px;
}
.g-records .big {
    width: 58px;
}
.big-text {
    margin-top: 4px;
    line-height: 17px;
    text-align: center;
}
.big .chev {
    margin: 5px 0 0;
}
.big .refresh-text .chev {
    margin: 0 0 1px 3px;
}
.big.off {
    color: #aaa;
}
.refresh-text {
    margin-top: -1px;
}
.col {
    display: flex;
    flex: none;
    flex-direction: column;
    width: 103px;
    margin-top: -1px;
}
.g-clip .col {
    width: 110px;
}
.g-sort .col:last-child,
.g-find .col {
    width: 78px;
}
.g-records .col {
    width: 84px;
}
.g-records .col:last-child {
    width: 76px;
}
.rb {
    display: flex;
    align-items: center;
    gap: 4px;
    height: 26px;
    font-size: 11.6px;
    white-space: nowrap;
}
.rb.off {
    color: #aaa;
}
.rb .chev {
    margin-left: 1px;
}
.rb .chev-far {
    margin-left: 10px;
}
.az {
    font-size: 8px;
    fill: #444;
}
.az-blue {
    fill: #2e75b6;
}
.az-off {
    fill: #b5b5b5;
}
.abc {
    font-size: 7px;
    fill: #b5b5b5;
}
.fmt-row {
    display: flex;
    align-items: center;
    padding-left: 8px;
}
.fmt-top {
    height: 24px;
    margin-top: 9px;
}
.fmt-bottom {
    height: 26px;
    margin-top: 6px;
    margin-bottom: 13px;
    padding-left: 17px;
    font-size: 13px;
}
.combo {
    display: flex;
    align-items: center;
    justify-content: space-between;
    height: 24px;
    padding: 0 3px 0 2px;
    border: 1px solid #b8b8b8;
    border-radius: 4px;
    font-size: 12.5px;
}
.combo-font {
    width: 150px;
}
.combo-size {
    width: 55px;
    margin-left: 2px;
}
.list-icons {
    display: flex;
    align-items: center;
    gap: 10px;
    margin-left: 7px;
}
.pilcrow {
    margin-left: 7px;
    color: #bbb;
    font-size: 10px;
}
.list-icons .chev {
    margin-left: 0;
}
.fmt-b { width: 25px; font-weight: 700; }
.fmt-i { width: 26px; font-family: "Liberation Serif", serif; }
.fmt-u { width: 23px; margin-left: 2px; }
.swatch {
    display: inline-flex;
    flex-direction: column;
    align-items: center;
    width: 16px;
    height: 19px;
    border-bottom: 4px solid #c00;
    font-size: 14px;
    line-height: 15px;
}
.swatch-hl {
    margin-left: 11px;
    border-bottom-color: #bbb;
}
.swatch-fill {
    margin-left: 11px;
    border-bottom-color: #777;
}
.aligns {
    display: flex;
    gap: 10px;
    margin-left: 12px;
}
.grid-btn {
    margin-left: 13px;
}
.alt-btn {
    margin-left: 15px;
}
.collapse {
    position: absolute;
    right: 9px;
    bottom: 8px;
}

/* work area */
.workspace {
    display: flex;
    flex: 1;
    min-height: 0;
}
.nav-pane {
    display: flex;
    flex: none;
    flex-direction: column;
    width: 143px;
    padding-left: 4px;
    border-right: 3px solid #d4d4d4;
}
.nav-head {
    display: flex;
    align-items: center;
    height: 36px;
    padding: 0 0 0 5px;
}
.nav-title {
    width: 80px;
    font-size: 20px;
    white-space: nowrap;
}
.nav-close {
    margin-left: 13px;
}
.nav-search {
    display: flex;
    align-items: center;
    justify-content: space-between;
    width: 130px;
    height: 23px;
    padding: 0 2px 0 5px;
    border: 1px solid #aaa;
    background: #fff;
    font-size: 10.5px;
}
.nav-main {
    position: relative;
    display: flex;
    flex: 1;
    min-height: 0;
    overflow: hidden;
    margin-top: 3px;
}
.nav-list {
    flex: none;
    width: 112px;
}
.nav-sec {
    display: flex;
    align-items: center;
    justify-content: space-between;
    height: 21.4px;
    padding: 0 10px 0 9px;
    font-size: 12px;
    font-weight: 700;
}
.nav-item {
    display: flex;
    align-items: center;
    gap: 10px;
    height: 24.6px;
    padding-left: 12px;
    color: #444;
    font-size: 11.5px;
    white-space: nowrap;
}
.nav-item.is-selected {
    border: 1px solid #8a8a8a;
    padding-left: 11px;
}
.nav-item.is-hover {
    border: 1px solid #e8e8e8;
    padding-left: 11px;
}
.nav-scroll {
    display: flex;
    flex-direction: column;
    align-items: center;
    width: 11px;
    margin-left: 4px;
    padding-top: 6px;
}
.arrow-up {
    flex: none;
    border: 5px solid transparent;
    border-top: 0;
    border-bottom: 5px solid #666;
}
.arrow-down {
    flex: none;
    border: 5px solid transparent;
    border-bottom: 0;
    border-top: 5px solid #666;
}
.nav-thumb {
    flex: none;
    width: 8px;
    height: 335px;
    margin: 7px 0 53px;
    background: #777;
}

/* document */
.doc {
    display: flex;
    flex: 1;
    flex-direction: column;
    min-width: 0;
    margin-left: 1px;
}
.doc-tabs {
    display: flex;
    justify-content: space-between;
    align-items: center;
    flex: none;
    height: 24px;
    padding-right: 6px;
    border-bottom: 1px solid #d0d0d0;
}
.doc-tab {
    display: flex;
    align-items: center;
    gap: 7px;
    width: 152px;
    height: 24px;
    padding-left: 6px;
    border-top: 3px solid #a4262c;
    background: #fff;
    color: #333;
    font-size: 10.5px;
    font-weight: 700;
}
.doc-tab span {
    width: 97px;
}
.sheet-wrap {
    position: relative;
    display: flex;
    flex: 1;
    min-height: 0;
    background: #fff;
}
.sheet {
    flex: 1;
    overflow: hidden;
}
.grid {
    width: 853px;
    table-layout: fixed;
    border-collapse: separate;
    border-spacing: 0;
    font-family: Lato, "Liberation Sans", sans-serif;
    font-size: 13.5px;
    color: #2b2b2b;
}
.c-sel { width: 18px; }
.c-std { width: 96px; }
.c-street { width: 163px; }
.grid th {
    position: relative;
    height: 20px;
    padding: 0 14px 0 0;
    border-right: 1px solid #cfcfcf;
    border-bottom: 1px solid #cfcfcf;
    background: #e3e6e9;
    font-weight: 400;
    color: #444;
    letter-spacing: 0.2px;
}
.grid th.th-active {
    background: #fbe08a;
}
.drop {
    position: absolute;
    right: 5px;
    top: 8px;
    border: 3px solid transparent;
    border-bottom: 0;
    border-top: 4px solid #444;
}
.grid td {
    height: 19.33px;
    padding: 0 2px;
    overflow: hidden;
    border-right: 1px solid #e0e0e0;
    border-bottom: 1px solid #e0e0e0;
    white-space: nowrap;
    line-height: 17px;
}
.grid tbody tr:nth-child(even) td {
    background: #f2f2f2;
}
.grid td.sel,
.grid th.sel,
.grid tbody tr:nth-child(even) td.sel {
    background: #e4e8eb;
    border-color: #cdd3d9;
}
.grid td.num {
    padding-right: 0;
    font-size: 13px;
    text-align: right;
}
.row-current td {
    background: #a8cdee;
    color: #111;
}
.grid .row-current td.sel {
    background: #fcd35f;
}
.grid .row-current td.num {
    background: #fff;
    border-bottom: 1px solid #e3a6a6;
}
.cell-mark {
    display: inline-block;
    background: #000;
    color: #fff;
}
.v-scroll {
    display: flex;
    flex: none;
    flex-direction: column;
    align-items: center;
    width: 16px;
    padding-top: 6px;
    background: #f4f4f4;
}
.v-thumb {
    flex: none;
    width: 8px;
    height: 34px;
    margin: 6px 0 375px;
    border-radius: 4px;
    background: #777;
}
.activate {
    position: absolute;
    left: 855px;
    bottom: -7px;
    color: #b5b5b5;
    font-size: 14px;
    pointer-events: none;
}
.activate-big {
    margin-bottom: 1px;
    font-size: 19px;
}
.record-bar {
    display: flex;
    align-items: center;
    flex: none;
    height: 19px;
    padding-left: 4px;
    border-top: 1px solid #bdbdbd;
    background: #efefef;
    color: #777;
    font-size: 10.5px;
}
.rec-label {
    width: 35px;
    font-size: 10px;
}
.rec-btn {
    width: 16px;
    color: #444;
    font-size: 10px;
    text-align: center;
}
.rec-off {
    color: #bbb;
}
.rec-input {
    width: 48px;
    height: 17px;
    margin: 0 2px;
    padding-left: 3px;
    background: #fff;
    color: #333;
    line-height: 17px;
}
.rec-filter {
    display: flex;
    align-items: center;
    gap: 2px;
    margin-left: 15px;
    color: #b5b5b5;
}
.rec-search {
    width: 70px;
    height: 17px;
    margin-left: 13px;
    padding-left: 2px;
    background: #fff;
    color: #333;
    line-height: 17px;
}
.rec-corner {
    width: 16px;
    height: 18px;
    margin-left: auto;
    background: #ccc;
}

/* status bar */
.statusbar {
    display: flex;
    align-items: center;
    flex: none;
    height: 20px;
    padding-left: 11px;
    border-top: 1px solid #d8d8d8;
    font-size: 10.5px;
}
.statusbar span:first-child {
    margin-right: auto;
}
.view-btn {
    display: flex;
    align-items: center;
    justify-content: center;
    width: 30px;
    height: 19px;
    margin-right: 6px;
}
.view-btn.is-on {
    width: 39px;
    background: #e2e2e2;
}

/* windows taskbar */
.taskbar {
    display: flex;
    align-items: center;
    flex: none;
    height: 40px;
    background: #17293a;
    color: #eee;
}
.start {
    display: flex;
    align-items: center;
    justify-content: center;
    flex: none;
    width: 49px;
    height: 40px;
    background: #14242f;
}
.task-search {
    display: flex;
    align-items: center;
    flex: none;
    width: 287px;
    height: 40px;
    padding-left: 11px;
    border-top: 1px solid #bbb;
    background: #f0f0f0;
    color: #333;
    font-size: 14.2px;
}
.task-search span {
    margin-left: 11px;
}
.condor {
    margin-left: 42px;
}
.task-icons {
    display: flex;
}
.slot {
    position: relative;
    display: flex;
    align-items: center;
    justify-content: center;
    width: 50px;
    height: 40px;
}
.slot.is-open::after {
    content: "";
    position: absolute;
    left: 5px;
    right: 4px;
    bottom: 0;
    height: 2px;
    background: #76b9ed;
}
.slot.is-active {
    background: #3a4a58;
}
.slot.is-active::after {
    left: 0;
    right: 0;
}
.word-w {
    font-size: 10px;
    font-weight: 700;
    fill: #fff;
}
.badge-num {
    font-size: 9px;
    fill: #fff;
}
.tray {
    display: flex;
    align-items: center;
    flex: 1;
    padding-left: 45px;
}
.weather {
    display: flex;
    align-items: center;
    gap: 6px;
}
.temp {
    font-size: 14.5px;
}
.tray-caret { margin-left: 20px; }
.tray-mic { margin-left: 12px; }
.tray-bat { margin-left: 11px; }
.tray-cam { margin-left: 10px; }
.tray-wifi { margin-left: 8px; }
.tray-vol { margin-left: 7px; }
.clock {
    flex: none;
    width: 66px;
    margin-left: 8px;
    font-size: 12px;
    line-height: 19px;
    text-align: center;
}
.tray-note {
    margin-left: 14px;
}

/* overlays */
.cursor {
    position: absolute;
    left: 54px;
    top: 313px;
}
.recorder {
    position: absolute;
    left: 1201px;
    top: 290px;
    display: flex;
    flex-direction: column;
    align-items: center;
    width: 26px;
    height: 223px;
    padding-top: 3px;
    border-radius: 3px;
    background: #1e1e1e;
    color: #fff;
}
.rec-top {
    display: flex;
    align-items: center;
    flex: none;
    gap: 2px;
    height: 10px;
    font-size: 6px;
}
.rc-camera { margin-top: 6px; }
.rec-dot {
    flex: none;
    width: 17px;
    height: 17px;
    margin-top: 9px;
    border: 2px solid #5b2320;
    border-radius: 50%;
    background: #ee5350;
    box-shadow: 0 0 0 1px #8a3a36;
}
.rec-time {
    flex: none;
    margin-top: 4px;
    color: #ddd;
    font-size: 8px;
    line-height: 10px;
}
.rc-mic { margin-top: 5px; }
.rc-speaker { margin-top: 6px; }
.rc-webcam { margin-top: 8px; }
.rec-dash {
    flex: none;
    width: 24px;
    height: 1px;
    margin-top: 7px;
    border-top: 1px dashed #ddd;
}
.rc-stack { margin-top: 7px; }
.rc-gear { margin-top: 8px; }
```
